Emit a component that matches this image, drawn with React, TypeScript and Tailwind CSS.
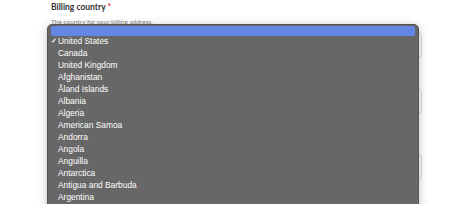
const COUNTRIES = [
  "Canada",
  "United Kingdom",
  "Afghanistan",
  "Åland Islands",
  "Albania",
  "Algeria",
  "American Samoa",
  "Andorra",
  "Angola",
  "Anguilla",
  "Antarctica",
  "Antigua and Barbuda",
  "Argentina",
];

export default function App() {
  return (
    <div
      className="relative h-[204px] w-[474px] overflow-hidden bg-white"
      style={{ fontFamily: '"Liberation Sans", Arial, sans-serif' }}
    >
      <div className="ml-[51px] w-[371px] pt-[2px]">
        <div
          className="text-[8.5px] font-bold leading-[11px] text-[#333]"
          style={{ fontFamily: "Lato, sans-serif" }}
        >
          Billing country <span className="text-[#d33]">*</span>
        </div>
        <div
          className="mt-[5px] text-[6.5px] leading-[8px] text-[#888]"
          style={{ fontFamily: "Lato, sans-serif" }}
        >
          The country for your billing address.
        </div>
        <div className="mt-[6px] h-[26px] rounded border border-[#ddd]" />
        <div className="mt-[30px] h-[26px] rounded border border-[#ddd]" />
        <div className="mt-[40px] h-[26px] rounded border border-[#ddd]" />
      </div>

      <div className="absolute left-[47px] top-[24px] w-[372px] rounded-t-[5px] border border-[#555] bg-[#676767] shadow-[0_2px_10px_rgba(0,0,0,0.25)]">
        <div className="px-[3px] pt-[1px]">
          <div className="h-[10px] rounded-[2px] bg-[#6487e6]" />
        </div>
        <div className="-mt-[1px] pb-[40px] text-[8.4px] leading-[12px] text-white">
          <div className="flex items-center">
            <span className="w-[10px] pl-[3px] text-[6.5px] font-bold">✓</span>
            <span>United States</span>
          </div>
          {COUNTRIES.map((c) => (
            <div key={c} className="pl-[10px]">
              {c}
            </div>
          ))}
        </div>
      </div>
    </div>
  );
}
